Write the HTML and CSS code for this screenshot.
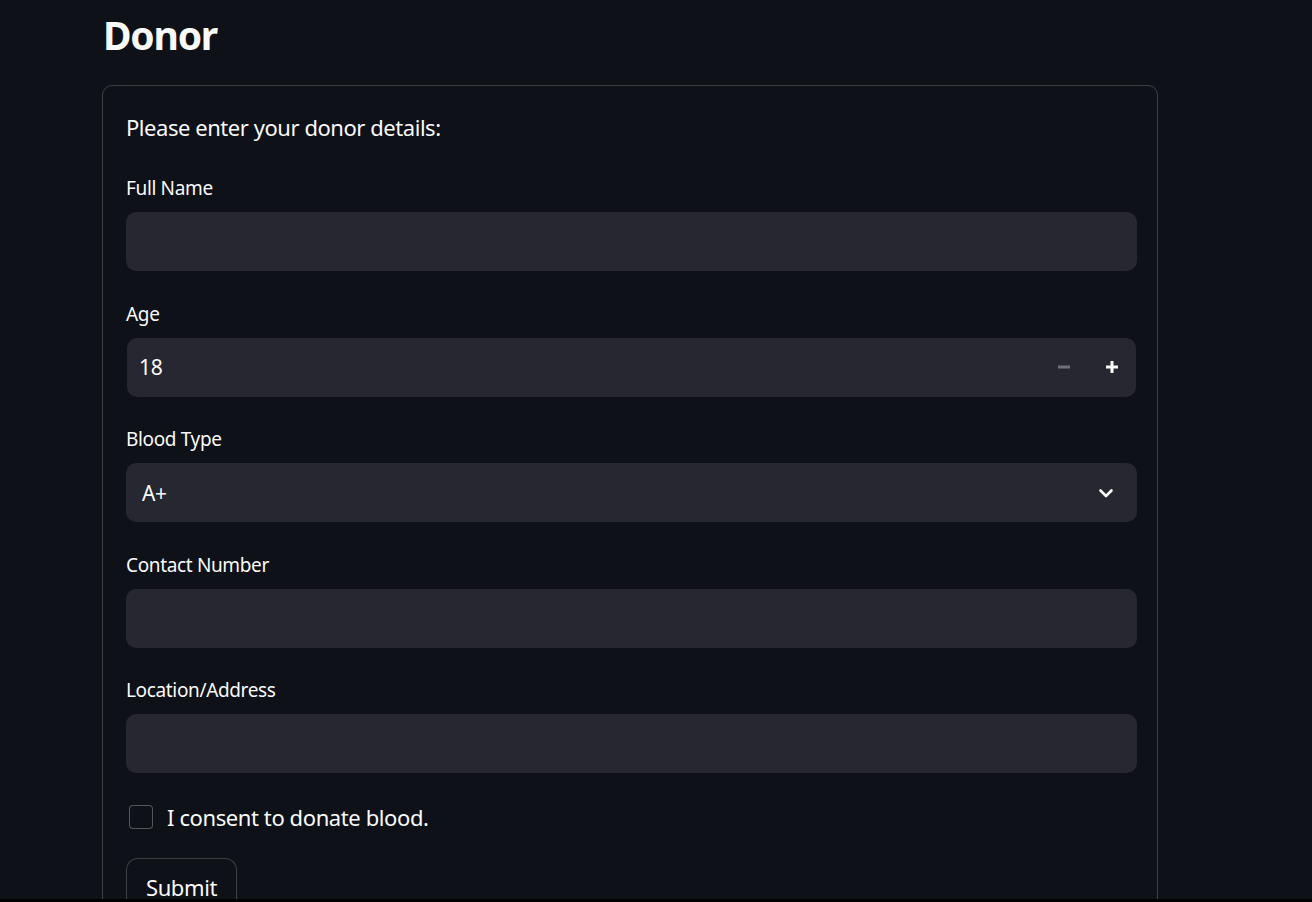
FILE: index.html
```html
<!DOCTYPE html>
<html lang="en">
<head>
<meta charset="utf-8">
<title>Donor</title>
<link rel="stylesheet" href="styles.css">
</head>
<body>
<main class="main">
  <h1 class="title">Donor</h1>
  <form class="card">
    <p class="intro">Please enter your donor details:</p>
    <div class="field">
      <label class="label">Full Name</label>
      <div class="input"></div>
    </div>
    <div class="field">
      <label class="label">Age</label>
      <div class="input number">
        <span class="value">18</span>
        <div class="steppers">
          <span class="step minus"><svg width="14" height="14" viewBox="0 0 14 14"><rect x="1" y="5.5" width="12" height="3" fill="currentColor"/></svg></span>
          <span class="step plus"><svg width="14" height="14" viewBox="0 0 14 14"><rect x="1" y="5.5" width="12" height="3" fill="currentColor"/><rect x="5.5" y="1" width="3" height="12" fill="currentColor"/></svg></span>
        </div>
      </div>
    </div>
    <div class="field">
      <label class="label">Blood Type</label>
      <div class="input select">
        <span class="value">A+</span>
        <svg class="chevron" width="18" height="18" viewBox="0 0 18 18"><path d="M3.5 6.5 L9 12 L14.5 6.5" fill="none" stroke="currentColor" stroke-width="2.6" stroke-linecap="round" stroke-linejoin="round"/></svg>
      </div>
    </div>
    <div class="field">
      <label class="label">Contact Number</label>
      <div class="input"></div>
    </div>
    <div class="field">
      <label class="label">Location/Address</label>
      <div class="input"></div>
    </div>
    <div class="check-row">
      <span class="checkbox"></span>
      <span class="check-text">I consent to donate blood.</span>
    </div>
    <button type="button" class="submit">Submit</button>
  </form>
</main>
<div class="bottom-edge"></div>
</body>
</html>
```

FILE: styles.css
```css
html, body {
  margin: 0;
  padding: 0;
  height: 100%;
  overflow: hidden;
}
body {
  background: #0e1117;
  color: #fafafa;
  font-family: "Noto Sans", "Open Sans", sans-serif;
}
.main {
  width: 1056px;
  margin-left: 102px;
  display: flex;
  flex-direction: column;
}
.title {
  margin: 0;
  padding: 10px 0 0 1px;
  height: 85px;
  box-sizing: border-box;
  font-size: 39px;
  line-height: 50px;
  font-weight: 700;
  letter-spacing: -1.2px;
}
.card {
  border: 1px solid rgba(250, 250, 250, 0.2);
  border-radius: 10px;
  padding: 24px 20px 60px 23px;
  display: flex;
  flex-direction: column;
}
.intro {
  margin: 0;
  font-size: 22px;
  line-height: 34px;
  letter-spacing: -0.45px;
}
.field {
  display: flex;
  flex-direction: column;
  gap: 9px;
  margin-top: 27.5px;
}
.intro + .field {
  margin-top: 29px;
}
.label {
  font-size: 19px;
  line-height: 30px;
  letter-spacing: -0.35px;
  height: 30px;
}
.input {
  height: 59px;
  background: #262730;
  border-radius: 10px;
  display: flex;
  align-items: center;
  box-sizing: border-box;
  font-size: 21px;
  letter-spacing: -0.3px;
}
.number {
  margin-left: 1px;
  margin-right: 1px;
  padding-left: 12px;
  justify-content: space-between;
}
.steppers {
  display: flex;
  align-items: center;
  height: 100%;
}
.step {
  width: 48px;
  height: 100%;
  display: flex;
  align-items: center;
  justify-content: center;
}
.minus { color: #6e7079; }
.plus { color: #fafafa; }
.select {
  padding-left: 16px;
  padding-right: 22px;
  justify-content: space-between;
}
.chevron { color: #fafafa; }
.check-row {
  margin-top: 27px;
  height: 34px;
  display: flex;
  align-items: center;
  gap: 14px;
  padding-left: 3px;
}
.checkbox {
  width: 24px;
  height: 24px;
  box-sizing: border-box;
  border: 1px solid rgba(250, 250, 250, 0.3);
  border-radius: 4px;
  background: #0e1117;
}
.check-text {
  font-size: 22px;
  letter-spacing: -0.4px;
  line-height: 34px;
}
.submit {
  margin-top: 24px;
  align-self: flex-start;
  width: 111px;
  height: 58px;
  background: #0e1117;
  color: #fafafa;
  border: 1px solid rgba(250, 250, 250, 0.2);
  border-radius: 12px;
  font-family: inherit;
  font-size: 22px;
  letter-spacing: -0.4px;
  padding: 0;
}
.bottom-edge {
  position: fixed;
  left: 0;
  right: 0;
  bottom: 0;
  height: 3px;
  background: #000;
}
```
